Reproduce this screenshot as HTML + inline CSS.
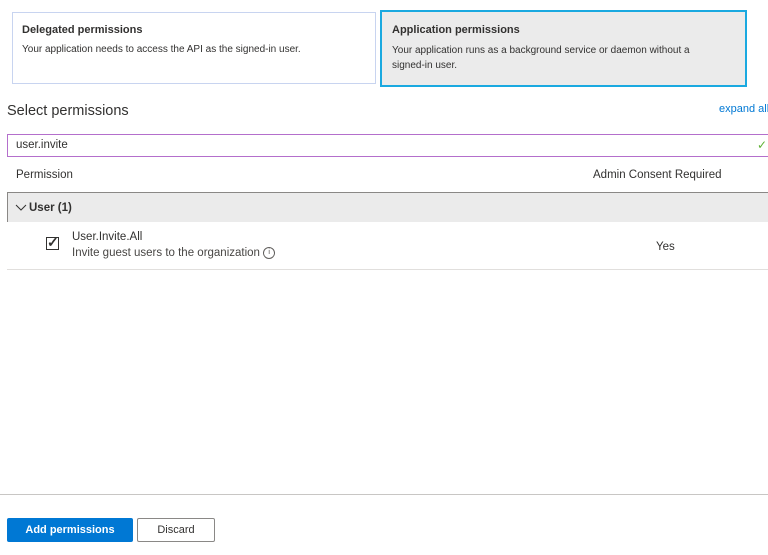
<!DOCTYPE html>
<html><head><meta charset="utf-8"><style>
body{margin:0;width:768px;height:555px;overflow:hidden;background:#fff;font-family:"Liberation Sans",sans-serif;color:#323130;position:relative;font-size:11px}
.a{position:absolute;white-space:nowrap}
</style></head><body>
<div class="a" style="left:12px;top:12px;width:364px;height:72px;border:1px solid #c8d4f0;box-sizing:border-box"></div>
<div class="a" style="left:22px;top:24px;font-size:11px;font-weight:bold;color:#323130">Delegated permissions</div>
<div class="a" style="left:22px;top:44px;font-size:10px">Your application needs to access the API as the signed-in user.</div>
<div class="a" style="left:380px;top:10px;width:367px;height:77px;border:2px solid #1aa9e0;background:#ebebeb;box-sizing:border-box"></div>
<div class="a" style="left:392px;top:24px;font-size:11px;font-weight:bold">Application permissions</div>
<div class="a" style="left:392px;top:43px;font-size:10px;line-height:15px">Your application runs as a background service or daemon without a<br>signed-in user.</div>
<div class="a" style="left:7px;top:103px;font-size:14.5px">Select permissions</div>
<div class="a" style="left:719px;top:103px;font-size:11px;color:#0078d4">expand all</div>
<div class="a" style="left:7px;top:134px;width:770px;height:23px;border:1px solid #b46fcc;box-sizing:border-box"></div>
<div class="a" style="left:16px;top:139px;font-size:11.5px">user.invite</div>
<div class="a" style="left:757px;top:138px;color:#5fb236;font-size:12px">✓</div>
<div class="a" style="left:16px;top:169px;font-size:11.5px">Permission</div>
<div class="a" style="left:593px;top:169px;font-size:11.5px">Admin Consent Required</div>
<div class="a" style="left:7px;top:192px;width:770px;height:30px;background:#ebebeb;border:1px solid #8a8886;border-bottom:none;box-sizing:border-box"></div>
<svg class="a" style="left:15px;top:204px" width="12" height="8"><path d="M1 1L6 6L11 1" fill="none" stroke="#323130" stroke-width="1"/></svg>
<div class="a" style="left:29px;top:202px;font-size:11.5px;font-weight:bold">User (1)</div>
<div class="a" style="left:46px;top:237px;width:13px;height:13px;border:1px solid #323130;box-sizing:border-box"></div>
<div class="a" style="left:47px;top:234px;font-size:14px;font-weight:bold">✓</div>
<div class="a" style="left:72px;top:231px;font-size:11.5px">User.Invite.All</div>
<div class="a" style="left:72px;top:247px;font-size:11.5px;color:#484644">Invite guest users to the organization <span style="display:inline-block;width:10px;height:10px;border:1px solid #605e5c;border-radius:50%;font-size:7px;line-height:10px;text-align:center;vertical-align:middle">i</span></div>
<div class="a" style="left:656px;top:241px;font-size:11.5px">Yes</div>
<div class="a" style="left:7px;top:269px;width:761px;height:1px;background:#e1dfdd"></div>
<div class="a" style="left:0;top:494px;width:768px;height:1px;background:#c8c6c4"></div>
<div class="a" style="left:7px;top:518px;width:126px;height:24px;background:#0078d4;border-radius:2px;color:#fff;font-weight:bold;font-size:11px;text-align:center;line-height:24px">Add permissions</div>
<div class="a" style="left:137px;top:518px;width:78px;height:24px;border:1px solid #8a8886;box-sizing:border-box;border-radius:2px;font-size:11px;text-align:center;line-height:22px">Discard</div>
</body></html>
